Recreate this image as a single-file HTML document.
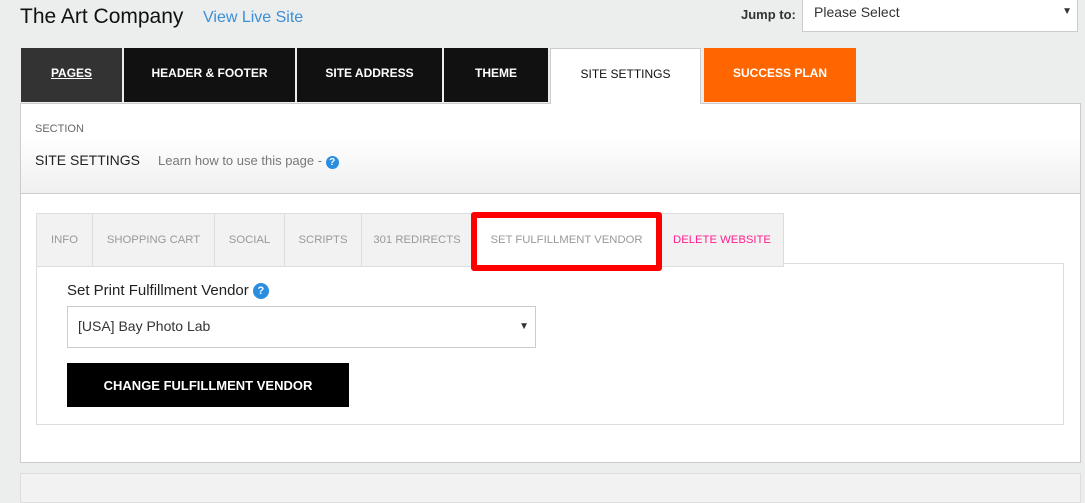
<!DOCTYPE html>
<html><head><style>
*{box-sizing:border-box;margin:0;padding:0}
body{width:1085px;height:489px;overflow:hidden;background:#eceded;font-family:"Liberation Sans",sans-serif;position:relative}
.a{position:absolute}
.tab{position:absolute;top:48px;height:54px;background:#111;color:#fff;font-size:12px;font-weight:bold;display:flex;align-items:center;justify-content:center;padding-bottom:5px}
.it{position:absolute;top:213px;height:54px;background:#f2f2f2;border:1px solid #ddd;border-right:none;color:#999;font-size:11.3px;display:flex;align-items:center;justify-content:center;padding-bottom:1px}
.q{display:inline-block;width:15px;height:15px;border-radius:50%;background:#2a8ee0;color:#fff;font-size:11px;font-weight:bold;text-align:center;line-height:15px}
</style></head><body>
<div class="a" style="left:20px;top:5px;font-size:21px;color:#111">The Art Company</div>
<div class="a" style="left:203px;top:9px;font-size:16px;color:#3a8fd8">View Live Site</div>
<div class="a" style="left:741px;top:7px;font-size:13px;font-weight:bold;color:#333">Jump to:</div>
<div class="a" style="left:802px;top:-1px;width:276px;height:33px;background:#fff;border:1px solid #ccc;font-size:14px;color:#333;padding:4px 11px">Please Select<span style="position:absolute;right:5px;top:6px;font-size:10px">▼</span></div>

<div class="tab" style="left:21px;width:101px;background:#333"><u>PAGES</u></div>
<div class="tab" style="left:124px;width:171px">HEADER &amp; FOOTER</div>
<div class="tab" style="left:297px;width:145px">SITE ADDRESS</div>
<div class="tab" style="left:444px;width:104px">THEME</div>
<div class="tab" style="left:550px;width:151px;height:56px;background:#fff;color:#111;font-weight:normal;border:1px solid #ccc;border-bottom:none;z-index:2;padding-bottom:6px">SITE SETTINGS</div>
<div class="tab" style="left:704px;width:152px;background:#ff6600">SUCCESS PLAN</div>

<div class="a" style="left:20px;top:103px;width:1061px;height:360px;background:#fff;border:1px solid #ccc"></div>
<div class="a" style="left:21px;top:104px;width:1059px;height:90px;background:linear-gradient(#fff 35%,#f0f0f0);border-bottom:1px solid #ccc"></div>
<div class="a" style="left:35px;top:123px;font-size:11px;color:#666">SECTION</div>
<div class="a" style="left:35px;top:152px;font-size:14px;color:#222">SITE SETTINGS</div>
<div class="a" style="left:158px;top:153px;font-size:13px;color:#777">Learn how to use this page - <span class="q" style="width:13px;height:13px;line-height:13px;font-size:10px">?</span></div>

<div class="a" style="left:36px;top:263px;width:1028px;height:162px;border:1px solid #ddd;background:#fff"></div>
<div class="it" style="left:36px;width:56px">INFO</div>
<div class="it" style="left:92px;width:122px">SHOPPING CART</div>
<div class="it" style="left:214px;width:70px">SOCIAL</div>
<div class="it" style="left:284px;width:77px">SCRIPTS</div>
<div class="it" style="left:361px;width:111px">301 REDIRECTS</div>
<div class="it" style="left:472px;width:188px;background:#fff">SET FULFILLMENT VENDOR</div>
<div class="it" style="left:660px;width:124px;color:#ff1f8e;border-right:1px solid #ddd">DELETE WEBSITE</div>
<div class="a" style="left:471px;top:212px;width:191px;height:59px;border:6px solid #f00;border-radius:3px"></div>

<div class="a" style="left:67px;top:282px;font-size:15px;color:#222">Set Print Fulfillment Vendor <span class="q" style="width:16px;height:16px;line-height:16px;vertical-align:1px">?</span></div>
<div class="a" style="left:67px;top:306px;width:469px;height:42px;border:1px solid #ccc;font-size:14px;color:#333;padding:11px 10px">[USA] Bay Photo Lab<span style="position:absolute;right:6px;top:14px;font-size:10px">▼</span></div>
<div class="a" style="left:67px;top:363px;width:282px;height:44px;background:#000;color:#fff;font-size:13px;font-weight:bold;display:flex;align-items:center;justify-content:center">CHANGE FULFILLMENT VENDOR</div>

<div class="a" style="left:20px;top:473px;width:1061px;height:30px;background:#f2f2f2;border:1px solid #ddd"></div>
</body></html>
